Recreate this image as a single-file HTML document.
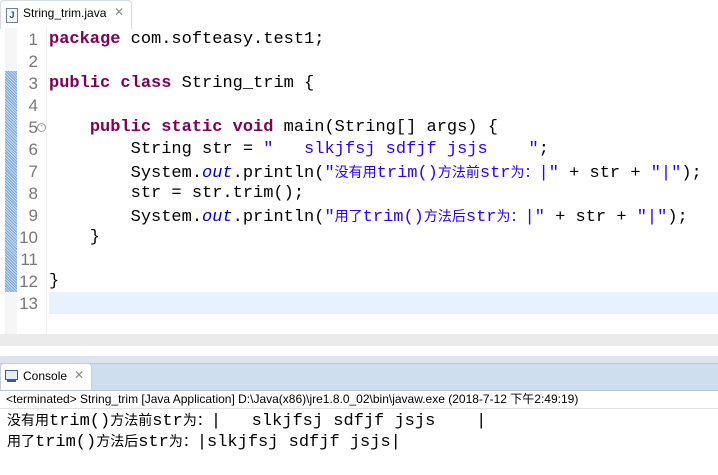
<!DOCTYPE html>
<html><head><meta charset="utf-8"><style>
body{margin:0;width:718px;height:475px;overflow:hidden;background:#fff;position:relative;font-family:"Liberation Mono","Noto Sans CJK SC",monospace}
.abs{position:absolute}
.ln{position:absolute;left:17px;width:21px;text-align:right;color:#787878;font-size:17px;line-height:22px;font-family:"Liberation Sans",sans-serif}
.cl{position:absolute;left:49px;font-size:17px;line-height:22px;white-space:pre;color:#000}
.k{color:#7f0055;font-weight:bold}
.s{color:#2a00ff}
.o{color:#0000c0;font-style:italic}
.c{font-family:"Noto Sans CJK SC",sans-serif;font-size:14px}
.ui{font-family:"Liberation Sans","Noto Sans CJK SC",sans-serif}
</style></head><body>
<!-- editor tab bar -->
<div class="abs" style="left:0;top:0;width:718px;height:28px;background:#fff"></div>
<div class="abs" style="left:0;top:0;width:130px;height:28px;background:#fff;border:1px solid #d6dbe4;border-bottom:none;border-radius:4px 4px 0 0"></div>
<div class="abs" style="left:6px;top:8px;width:10px;height:13px;border:1px solid #6f7f99;background:#f4f6fa;font:bold 9px 'Liberation Sans';color:#2a4c8c;text-align:center;line-height:13px">J</div>
<div class="abs ui" style="left:23px;top:6px;font-size:12px;color:#000">String_trim.java</div>
<div class="abs ui" style="left:114px;top:5px;font-size:12px;color:#888">✕</div>
<!-- gutter -->
<div class="abs" style="left:5px;top:28px;width:12px;height:306px;background:#f6f6f6"></div>
<div class="abs" style="left:5px;top:71px;width:12px;height:221px;background:repeating-linear-gradient(45deg,#7fa7d8 0 1px,#c4d8f0 1px 2px)"></div>
<div class="abs" style="left:17px;top:28px;width:30px;height:306px;background:#fff"></div>
<div class="abs" style="left:46px;top:28px;width:1px;height:306px;background:#f0f0f0"></div>
<div class="abs" style="left:49px;top:292px;width:669px;height:22px;background:#e8f2fe"></div>
<div class="ln" style="top:29px">1</div>
<div class="ln" style="top:51px">2</div>
<div class="ln" style="top:73px">3</div>
<div class="ln" style="top:95px">4</div>
<div class="ln" style="top:117px">5</div>
<div class="abs" style="left:37px;top:123px;width:7px;height:7px;border:1px solid #999;border-radius:50%;font-size:7px;line-height:7px;text-align:center;color:#666">-</div>
<div class="ln" style="top:139px">6</div>
<div class="ln" style="top:161px">7</div>
<div class="ln" style="top:183px">8</div>
<div class="ln" style="top:205px">9</div>
<div class="ln" style="top:227px">10</div>
<div class="ln" style="top:249px">11</div>
<div class="ln" style="top:271px">12</div>
<div class="ln" style="top:293px">13</div>
<div class="cl" style="top:29px"><span class="k">package</span> com.softeasy.test1;</div>
<div class="cl" style="top:73px"><span class="k">public</span> <span class="k">class</span> String_trim {</div>
<div class="cl" style="top:117px">    <span class="k">public</span> <span class="k">static</span> <span class="k">void</span> main(String[] args) {</div>
<div class="cl" style="top:139px">        String str = <span class="s">"   slkjfsj sdfjf jsjs    "</span>;</div>
<div class="cl" style="top:161px">        System.<span class="o">out</span>.println(<span class="s">"<span class="c">没有用</span>trim()<span class="c">方法前</span>str<span class="c">为：</span>|"</span> + str + <span class="s">"|"</span>);</div>
<div class="cl" style="top:183px">        str = str.trim();</div>
<div class="cl" style="top:205px">        System.<span class="o">out</span>.println(<span class="s">"<span class="c">用了</span>trim()<span class="c">方法后</span>str<span class="c">为：</span>|"</span> + str + <span class="s">"|"</span>);</div>
<div class="cl" style="top:227px">    }</div>
<div class="cl" style="top:271px">}</div>
<!-- scrollbar -->
<div class="abs" style="left:0;top:334px;width:718px;height:12px;background:#ebebeb"></div>
<div class="abs" style="left:0;top:346px;width:718px;height:14px;background:#fff"></div>
<div class="abs" style="left:0;top:356px;width:718px;height:8px;background:#dfe3ee"></div>
<!-- console tab bar -->
<div class="abs" style="left:0;top:363px;width:718px;height:27px;background:#cfdeee;border-top:1px solid #b8c4d8"></div>
<div class="abs" style="left:0;top:363px;width:90px;height:27px;background:#fff;border-radius:4px 4px 0 0;border:1px solid #c8d0dc;border-bottom:none"></div>
<div class="abs" style="left:5px;top:370px;width:11px;height:8px;border:1px solid #3c5a8a;background:#e8eef8"></div>
<div class="abs" style="left:7px;top:380px;width:9px;height:2px;background:#3c5a8a"></div>
<div class="abs ui" style="left:23px;top:369px;font-size:12px;color:#000">Console</div>
<div class="abs ui" style="left:74px;top:368px;font-size:12px;color:#888">✕</div>
<div class="abs" style="left:0;top:390px;width:718px;height:1px;background:#b8c4d8"></div>
<div class="abs ui" style="left:6px;top:392px;font-size:12px;line-height:15px;color:#000;white-space:nowrap">&lt;terminated&gt; String_trim [Java Application] D:\Java(x86)\jre1.8.0_02\bin\javaw.exe (2018-7-12 下午2:49:19)</div>
<div class="abs" style="left:0;top:408px;width:718px;height:1px;background:#e0e0e0"></div>
<div class="cl" style="left:7px;top:410px;line-height:20px"><span class="c">没有用</span>trim()<span class="c">方法前</span>str<span class="c">为：</span>|   slkjfsj sdfjf jsjs    |</div>
<div class="cl" style="left:7px;top:431px;line-height:20px"><span class="c">用了</span>trim()<span class="c">方法后</span>str<span class="c">为：</span>|slkjfsj sdfjf jsjs|</div>
</body></html>
